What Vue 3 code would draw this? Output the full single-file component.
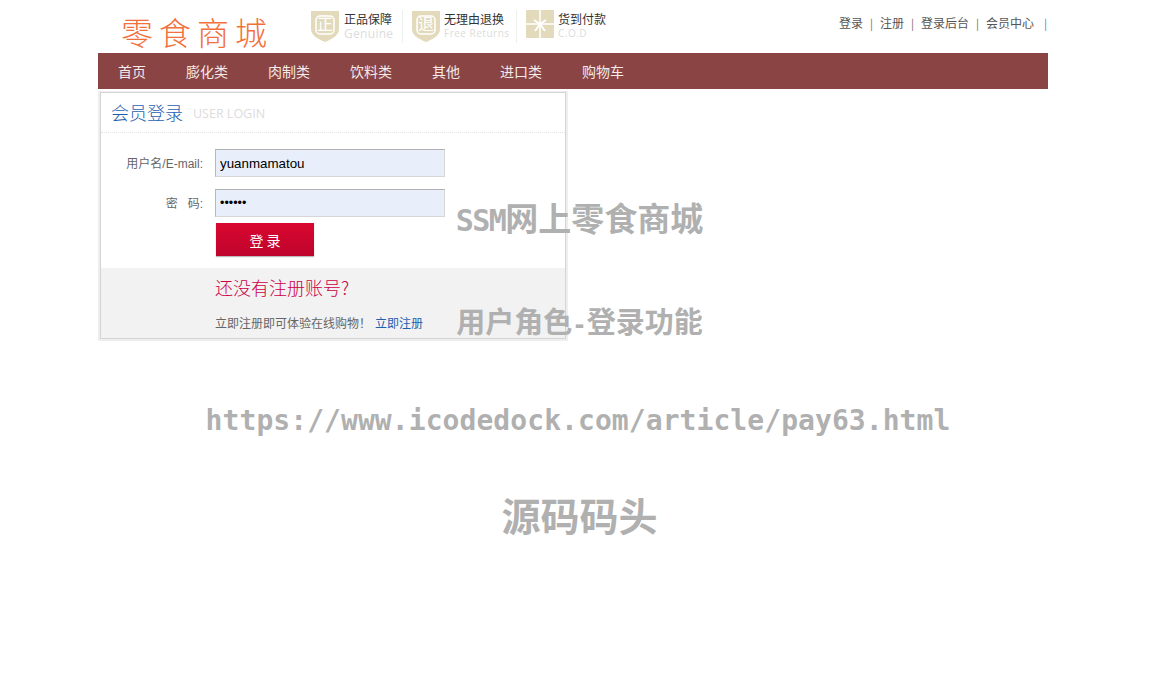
<script setup>
const navItems = ['首页', '膨化类', '肉制类', '饮料类', '其他', '进口类', '购物车']
const topLinks = ['登录', '注册', '登录后台', '会员中心']
</script>

<template>
  <div class="page">
    <div class="wrap">
      <header class="head">
        <div class="logo">零食商城</div>
        <div class="promises">
          <div class="promise p1">
            <svg class="shield" width="30" height="33" viewBox="0 0 30 33">
              <path d="M1 1 H29 V19 C29 26 20 30 15 32 C10 30 1 26 1 19 Z" fill="#e2dabb" />
              <rect x="6" y="6" width="18" height="18" rx="4" fill="none" stroke="#fff" stroke-width="1.5" />
              <text x="15" y="20" text-anchor="middle" class="seal">正</text>
            </svg>
            <div class="ptext"><b>正品保障</b><i>Genuine</i></div>
          </div>
          <div class="promise p2">
            <svg class="shield" width="30" height="33" viewBox="0 0 30 33">
              <path d="M1 1 H29 V19 C29 26 20 30 15 32 C10 30 1 26 1 19 Z" fill="#e2dabb" />
              <rect x="6" y="6" width="18" height="18" rx="4" fill="none" stroke="#fff" stroke-width="1.5" />
              <text x="15" y="20" text-anchor="middle" class="seal">退</text>
            </svg>
            <div class="ptext"><b>无理由退换</b><i class="wide">Free Returns</i></div>
          </div>
          <div class="promise p3">
            <svg class="shield" width="28" height="28" viewBox="0 0 28 28">
              <rect width="28" height="28" rx="1" fill="#e2dabb" />
              <path d="M14 0 V28 M0 14 H28" stroke="#fff" stroke-width="1.5" />
              <path d="M14 14 L8 10 M14 14 L20 10 M14 14 L9 21 M14 14 L19 21" stroke="#fff" stroke-width="2" />
            </svg>
            <div class="ptext"><b>货到付款</b><i class="wide">C.O.D</i></div>
          </div>
        </div>
        <nav class="top-links">
          <template v-for="link in topLinks" :key="link">
            <a>{{ link }}</a><span class="sep">|</span>
          </template>
        </nav>
      </header>

      <nav class="menu">
        <a v-for="item in navItems" :key="item">{{ item }}</a>
      </nav>

      <section class="card">
        <div class="card-inner">
          <div class="card-title"><h2>会员登录</h2><span>USER LOGIN</span></div>
          <form class="form" @submit.prevent>
            <div class="row">
              <label>用户名/E-mail:</label>
              <input class="name" type="text" value="yuanmamatou" />
            </div>
            <div class="row">
              <label>密&nbsp;&nbsp;&nbsp;码:</label>
              <input type="password" value="123456" />
            </div>
            <button type="submit">登 录</button>
          </form>
          <div class="register">
            <h3>还没有注册账号?</h3>
            <p>立即注册即可体验在线购物！<a>立即注册</a></p>
          </div>
        </div>
      </section>
    </div>

    <div class="mark w1"><span class="lat">SSM</span>网上零食商城</div>
    <div class="mark w2">用户角色<span class="lat">-</span>登录功能</div>
    <div class="mark w3">https://www.icodedock.com/article/pay63.html</div>
    <div class="mark w4">源码码头</div>
  </div>
</template>

<style>
html, body { margin: 0; background: #fff; }
</style>

<style scoped>
.page {
  position: relative;
  height: 682px;
  overflow: hidden;
  font-family: "Noto Sans CJK SC", "Liberation Sans", sans-serif;
}
.wrap { width: 950px; margin-left: 98px; }
.head { height: 53px; display: flex; align-items: flex-start; position: relative; }
.logo {
  width: 212px;
  padding-left: 23px;
  box-sizing: border-box;
  margin-top: 10px;
  font-size: 32px;
  line-height: 42px;
  font-weight: 300;
  letter-spacing: 6px;
  color: #f2703c;
  white-space: nowrap;
  font-family: "Noto Sans CJK SC", sans-serif;
}
.promises { display: flex; margin-top: 10px; height: 33px; }
.promise { display: flex; gap: 4px; }
.p1 { width: 92px; border-right: 1px solid #eee; margin-right: 8px; }
.p2 { width: 105px; border-right: 1px solid #eee; margin-right: 9px; }
.shield { flex: none; }
.seal { font-size: 16px; fill: #fff; font-family: "Noto Sans CJK SC", sans-serif; }
.ptext { display: flex; flex-direction: column; margin-top: 2px; }
.p2 .ptext { margin-left: -1px; }
.ptext b { font-weight: 400; font-size: 12px; line-height: 13px; color: #333; white-space: nowrap; }
.ptext i {
  font-style: normal;
  font-size: 12px;
  line-height: 15px;
  margin-top: 1px;
  color: #dcdcdc;
  font-family: "Open Sans", sans-serif;
  letter-spacing: 0.3px;
  white-space: nowrap;
}
.ptext i.wide { font-size: 10px; letter-spacing: 0.5px; }
.top-links {
  margin-left: auto;
  margin-top: 14px;
  display: flex;
  font-size: 12px;
  line-height: 18px;
  color: #555;
  white-space: nowrap;
}
.sep { margin: 0 7px; color: #7a6a5a; font-size: 11px; }
.sep:last-child { margin-right: 1px; margin-left: 10px; color: #3b8ad0; }
.menu {
  height: 36px;
  background: #8a4444;
  display: flex;
  padding-left: 20px;
  font-size: 14px;
  line-height: 36px;
  color: #f4eaea;
}
.menu a { margin-right: 40px; }
.card {
  margin-top: 2px;
  width: 470px;
  height: 250px;
  box-sizing: border-box;
  border-style: solid;
  border-color: #eee;
  border-width: 1px 2px 2px 2px;
}
.card-inner {
  height: 100%;
  box-sizing: border-box;
  border: 1px solid #d4d4d4;
  display: flex;
  flex-direction: column;
}
.card-title {
  height: 39px;
  border-bottom: 1px dotted #e5e5e5;
  box-sizing: content-box;
  display: flex;
  align-items: center;
  padding-left: 10px;
  gap: 10px;
}
.card-title h2 { margin: 0; font-size: 18px; font-weight: 300; color: #1f5fb0; line-height: 39px; }
.card-title span { font-size: 12.5px; color: #dcdcdc; font-family: "Open Sans", sans-serif; margin-top: 2px; }
.form { padding-top: 16px; height: 135px; box-sizing: border-box; }
.row { display: flex; align-items: center; height: 28px; margin-bottom: 12px; }
.row label {
  width: 102px;
  padding-bottom: 2px;
  text-align: right;
  font-size: 12px;
  color: #666;
  flex: none;
  white-space: nowrap;
  font-family: "Liberation Sans", "Noto Sans CJK SC", sans-serif;
}
.row input {
  margin-left: 12px;
  width: 230px;
  height: 28px;
  box-sizing: border-box;
  background: #e8effb;
  border: 1px solid #d6d6d6;
  border-top-color: #b0b0b0;
  border-left-color: #b8b8b8;
  outline: none;
  padding: 0 4px;
  font: 12.5px "Liberation Sans", sans-serif;
  color: #000;
}
.row input.name { font-size: 13.33px; }
button {
  display: block;
  margin: -6px 0 0 115px;
  width: 98px;
  height: 33px;
  border: 0;
  background: linear-gradient(#d9072f, #be042d);
  box-shadow: 0 1px 1px #bbb;
  color: #fff;
  font-size: 14px;
  font-family: "Noto Sans CJK SC", sans-serif;
  padding: 0;
}
.register { flex: 1; background: #f2f2f2; padding-left: 114px; }
.register h3 {
  margin: 6px 0 0;
  font-size: 18px;
  line-height: 26px;
  font-weight: 300;
  color: #cc0044;
}
.register p { margin: 15px 0 0; font-size: 12px; line-height: 16px; color: #666; white-space: nowrap; }
.register a { color: #1f5fb0; margin-left: 4px; }
.mark {
  position: absolute;
  left: 0;
  width: 1159px;
  text-align: center;
  color: #b0b0b0;
  font-weight: 700;
  white-space: nowrap;
  font-family: "Noto Sans CJK SC", sans-serif;
}
.lat { font-family: "DejaVu Sans Mono", monospace; }
.w1 { top: 196px; font-size: 33px; line-height: 42px; }
.w1 .lat { font-size: 30px; letter-spacing: -1.55px; }
.w2 { top: 299px; font-size: 29px; line-height: 42px; }
.w2 .lat { font-size: 24px; }
.w3 {
  top: 400px;
  font-size: 28px;
  line-height: 42px;
  letter-spacing: 0.07px;
  font-family: "DejaVu Sans Mono", monospace;
  text-indent: -3px;
}
.w4 { top: 491px; font-size: 39px; line-height: 46px; }
</style>
